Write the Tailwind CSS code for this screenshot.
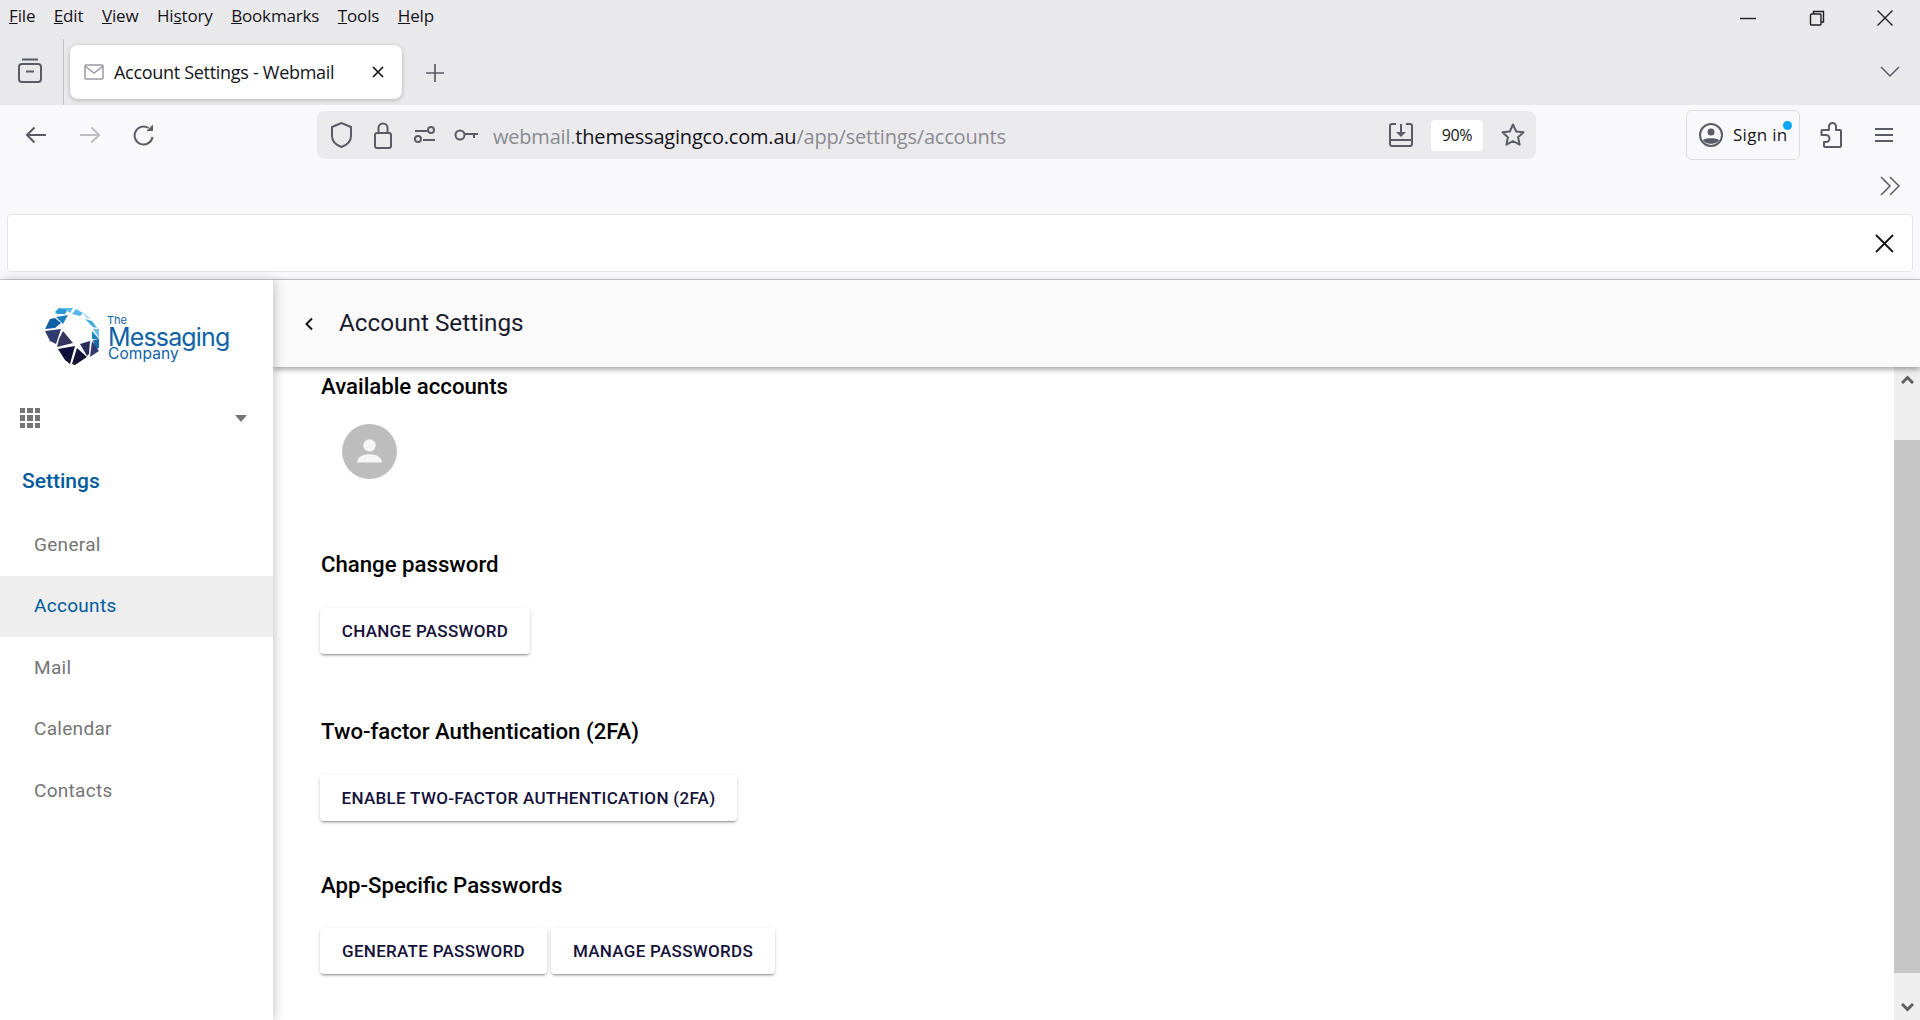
<!DOCTYPE html>
<html lang="en">
  <head>
    <meta charset="UTF-8" />
    <script src="https://cdn.jsdelivr.net/npm/@tailwindcss/browser@4"></script>
    <title>Account Settings - Webmail</title>
  </head>
  <body class="bg-white">
    <div class="flex flex-col w-[1920px] h-[1020px] overflow-hidden font-['Roboto',sans-serif]">
      <!-- menu bar -->
      <div class="flex items-center h-[35px] shrink-0 bg-[#e9e9ec] pl-[9px] text-[17px] text-[#15141a] font-['Open_Sans',sans-serif]">
        <div class="flex gap-[18.500px] tracking-[-0.15px] mb-[4px]">
          <span><u>F</u>ile</span>
          <span><u>E</u>dit</span>
          <span><u>V</u>iew</span>
          <span>Hi<u>s</u>tory</span>
          <span><u>B</u>ookmarks</span>
          <span><u>T</u>ools</span>
          <span><u>H</u>elp</span>
        </div>
        <div class="ml-auto flex items-center">
          <svg class="w-[18px] h-[18px] mr-[51px]" viewBox="0 0 18 18" fill="none" stroke="#1f1e24" stroke-width="1.4"><path d="M1 9.500h16"/></svg>
          <svg class="w-[18px] h-[18px] mr-[50px]" viewBox="0 0 18 18" fill="none" stroke="#1f1e24" stroke-width="1.4"><rect x="2.500" y="5" width="10.500" height="11" rx="1"/><path d="M5.500 5V2.500h10V13H13"/></svg>
          <svg class="w-[18px] h-[18px] mr-[26px]" viewBox="0 0 18 18" fill="none" stroke="#1f1e24" stroke-width="1.4"><path d="M1.500 1.500l15 15M16.500 1.500l-15 15"/></svg>
        </div>
      </div>

      <!-- tab strip -->
      <div class="flex h-[70px] shrink-0 bg-[#e9e9ec] text-[#15141a] font-['Open_Sans',sans-serif]">
        <div class="w-[63px] h-full flex items-center justify-center pb-[1px] pr-[3px]">
          <svg class="w-[26px] h-[28px]" viewBox="0 0 26 28" fill="none" stroke="#5b5b66" stroke-width="2"><rect x="2" y="8" width="22" height="18" rx="3"/><path d="M5 3.500h16M9 15.500h8"/></svg>
        </div>
        <div class="w-px h-[66px] mt-[4px] bg-[#c4c4c8]"></div>
        <div class="ml-[6px] mt-[10px] w-[332px] h-[54px] bg-white rounded-lg shadow-[0_1px_4px_rgba(0,0,0,0.25)] flex items-center pl-[14px] pr-[18px]">
          <svg class="w-[20px] h-[16px] shrink-0" viewBox="0 0 20 16" fill="none" stroke="#9a9aa3" stroke-width="1.5"><rect x="1" y="1" width="18" height="14" rx="1"/><path d="M1 2l9 7 9-7"/></svg>
          <span class="ml-[10px] text-[18px] tracking-[-0.3px] whitespace-nowrap">Account Settings - Webmail</span>
          <svg class="ml-auto w-[12px] h-[12px]" viewBox="0 0 12 12" fill="none" stroke="#15141a" stroke-width="1.7"><path d="M1 1l10 10M11 1L1 11"/></svg>
        </div>
        <div class="ml-[24px] mt-[11px] h-[54px] flex items-center">
          <svg class="w-[18px] h-[18px]" viewBox="0 0 18 18" fill="none" stroke="#5b5b66" stroke-width="1.7"><path d="M9 0v18M0 9h18"/></svg>
        </div>
        <div class="ml-auto mr-[20px] mt-[10px] h-[54px] flex items-center">
          <svg class="w-[20px] h-[12px]" viewBox="0 0 20 12" fill="none" stroke="#5b5b66" stroke-width="1.5"><path d="M1 1l9 9 9-9"/></svg>
        </div>
      </div>

      <!-- nav bar -->
      <div class="flex items-center h-[63px] shrink-0 bg-[#f9f9fb] pb-[3px] font-['Open_Sans',sans-serif]">
        <svg class="ml-[25px] w-[22px] h-[18px]" viewBox="0 0 22 18" fill="none" stroke="#5b5b66" stroke-width="2"><path d="M21 9H2M9.500 1.500L2 9l7.500 7.500"/></svg>
        <svg class="ml-[32px] w-[22px] h-[18px]" viewBox="0 0 22 18" fill="none" stroke="#bdbdc2" stroke-width="2"><path d="M1 9h19M12.500 1.500L20 9l-7.500 7.500"/></svg>
        <svg class="ml-[32px] w-[22px] h-[24px]" viewBox="0 0 22 24" fill="none" stroke="#5b5b66" stroke-width="2"><path d="M19.500 14a9 9 0 1 1-4-9"/><path d="M20 1.500v6.500h-6.500" fill="#5b5b66" stroke="none"/></svg>
        <div class="ml-[162px] w-[1219px] h-[48px] bg-[#eaeaed] rounded-lg flex items-center">
          <svg class="ml-[13px] w-[23px] h-[28px] shrink-0" viewBox="0 0 23 28" fill="none" stroke="#5b5b66" stroke-width="2"><path d="M11.500 2L2 6v9c0 5 4 9 9.500 11 5.500-2 9.500-6 9.500-11V6z"/></svg>
          <svg class="ml-[21px] w-[18px] h-[28px] shrink-0" viewBox="0 0 18 28" fill="none" stroke="#5b5b66" stroke-width="2"><rect x="1" y="12" width="16" height="15" rx="2"/><path d="M4.500 12V7a4.500 4.500 0 0 1 9 0v5"/></svg>
          <svg class="ml-[22px] w-[22px] h-[18px] shrink-0" viewBox="0 0 22 18" fill="none" stroke="#5b5b66" stroke-width="2"><path d="M1 5h12M9 14h12"/><circle cx="17" cy="4" r="3"/><circle cx="4" cy="13" r="3"/></svg>
          <svg class="ml-[18px] w-[24px] h-[14px] shrink-0" viewBox="0 0 24 14" fill="none" stroke="#5b5b66" stroke-width="2"><circle cx="6" cy="7" r="4.500"/><path d="M10 6h14M20 6v4"/></svg>
          <div class="ml-[15px] mt-[3px] text-[20px] tracking-[-0.2px] text-[#8a8a90] whitespace-nowrap">webmail.<span class="text-[#15141a]">themessagingco.com.au</span>/app/settings/accounts</div>
          <svg class="ml-auto w-[24px] h-[24px] shrink-0" viewBox="0 0 24 24" fill="none" stroke="#5b5b66" stroke-width="2"><path d="M7 1H3a2 2 0 0 0-2 2v18a2 2 0 0 0 2 2h18a2 2 0 0 0 2-2V3a2 2 0 0 0-2-2h-4M1 17h22"/><path d="M12 1v9" /><path d="M7 9h10l-5 5z" fill="#5b5b66" stroke="none"/></svg>
          <div class="ml-[18px] w-[52px] h-[31px] bg-white rounded-[4px] flex items-center justify-center text-[16px] text-[#15141a] tracking-[-0.4px] shrink-0">90%</div>
          <svg class="ml-[18px] mr-[11px] w-[24px] h-[24px] shrink-0" viewBox="0 0 24 24" fill="none" stroke="#5b5b66" stroke-width="2" stroke-linejoin="round"><path d="M12 1.500l3.200 7 7.300.8-5.400 5 1.500 7.400L12 18l-6.600 3.700 1.500-7.400-5.400-5 7.300-.8z"/></svg>
        </div>
        <div class="relative ml-[150px] w-[114px] h-[50px] border border-[#dcdce0] rounded-md flex items-center pl-[12px]">
          <svg class="w-[24px] h-[24px] shrink-0" viewBox="0 0 24 24" fill="none" stroke="#5b5b66" stroke-width="2"><circle cx="12" cy="12" r="11"/><circle cx="12" cy="9" r="3.500" fill="#5b5b66" stroke="none"/><path d="M4 17c2-2.500 14-2.500 16 0-2 5-14 5-16 0z" fill="#5b5b66" stroke="none"/></svg>
          <span class="ml-[10px] text-[17px] text-[#15141a] tracking-[0.3px] whitespace-nowrap">Sign in</span>
          <div class="absolute right-[7px] top-[10px] w-[9px] h-[9px] rounded-full bg-[#0aa5ff]"></div>
        </div>
        <svg class="ml-[20px] w-[22px] h-[26px]" viewBox="0 0 22 26" fill="none" stroke="#5b5b66" stroke-width="2" stroke-linejoin="round"><path d="M9 6V4.500a3.500 3.500 0 0 1 7 0V8h4a1 1 0 0 1 1 1v15a1 1 0 0 1-1 1H5a1 1 0 0 1-1-1v-4h2a3 3 0 0 0 0-7H1.500V9a1 1 0 0 1 1-1H9z"/></svg>
        <svg class="ml-[33px] w-[18px] h-[16px]" viewBox="0 0 18 16" fill="none" stroke="#5b5b66" stroke-width="2"><path d="M0 2h18M0 8h18M0 14h18"/></svg>
      </div>

      <!-- bookmarks row -->
      <div class="flex justify-end h-[36px] shrink-0 bg-[#f9f9fb] pr-[20px] pt-[8px]">
        <svg class="w-[20px] h-[20px]" viewBox="0 0 20 20" fill="none" stroke="#5b5b66" stroke-width="1.5"><path d="M1 1l9 9-9 9M10 1l9 9-9 9"/></svg>
      </div>

      <!-- notification bar -->
      <div class="h-[76px] shrink-0 bg-[#f9f9fb] px-[7px] pt-[10px] border-b border-[#cfcfd3]">
        <div class="h-[58px] bg-white border border-[#e6e6ea] rounded-[4px] flex items-center justify-end pr-[18px]">
          <svg class="w-[19px] h-[19px]" viewBox="0 0 19 19" fill="none" stroke="#15141a" stroke-width="1.8"><path d="M1 1l17 17M18 1L1 18"/></svg>
        </div>
      </div>

      <!-- page -->
      <div class="flex flex-1 min-h-0">
        <aside class="relative z-20 w-[273px] shrink-0 bg-white shadow-[2px_0_10px_rgba(0,0,0,0.22)]">
          <div class="flex items-start h-[98px] pl-[45px] pt-[27px]">
            <svg class="w-[56px] h-[58px] shrink-0" viewBox="0 0 56 58">
              <polygon fill="#2a9ad6" points="10,5 14,1 23,2 20,7 12,7"/>
              <polygon fill="#5cbcec" points="18,1 28,1 25,6"/>
              <polygon fill="#55b5e8" points="27,7 31,2 38,6 35,9"/>
              <polygon fill="#a5defa" points="38,5 46,12 41,11"/>
              <polygon fill="#3fa9e0" points="40,12 47,14 52,21 48,20"/>
              <polygon fill="#6cc0ea" points="48,22 54,22 54,31"/>
              <polygon fill="#1a85c5" points="47,24 54,32 47,32"/>
              <polygon fill="#1a6aa8" points="48,33 54,32 54,41 50,42"/>
              <polygon fill="#0f5fa5" points="0,22 5,12 10,11 16,16 10,21"/>
              <polygon fill="#1a7fc0" points="11,10 23,8 18,17"/>
              <polygon fill="#2f3b6e" points="0,24 16,22 11,37 5,34"/>
              <polygon fill="#35355f" points="18,24 28,36 12,40 14,32"/>
              <polygon fill="#10103a" points="13,42 30,39 25,57 20,53"/>
              <polygon fill="#141238" points="32,41 42,50 30,58 27,57"/>
              <polygon fill="#2a2a5c" points="35,37 45,34 44,47 42,49"/>
              <polygon fill="#343a6e" points="47,34 54,44 45,50"/>
            </svg>
            <div class="ml-[7px] mt-[8px] flex flex-col text-[#0f62a8] font-['Inter',sans-serif]">
              <span class="text-[11px] leading-[11px] ml-[-1px]">The</span>
              <span class="text-[25px] leading-[20px] mt-[1px] tracking-[-0.85px] whitespace-nowrap">Messaging</span>
              <span class="text-[15.500px] leading-[14px] tracking-[0.1px]">Company</span>
            </div>
          </div>
          <div class="flex items-center justify-between h-[40px] pl-[20px] pr-[26px] mt-[20px]">
            <div class="grid grid-cols-3 gap-[2px] w-[20px]">
              <i class="h-[5.300px] bg-[#757575]"></i><i class="h-[5.300px] bg-[#757575]"></i><i class="h-[5.300px] bg-[#757575]"></i>
              <i class="h-[5.300px] bg-[#757575]"></i><i class="h-[5.300px] bg-[#757575]"></i><i class="h-[5.300px] bg-[#757575]"></i>
              <i class="h-[5.300px] bg-[#757575]"></i><i class="h-[5.300px] bg-[#757575]"></i><i class="h-[5.300px] bg-[#757575]"></i>
            </div>
            <svg class="w-[12px] h-[7px]" viewBox="0 0 12 7" fill="#757575"><path d="M0 0h12L6 7z"/></svg>
          </div>
          <div class="pl-[22px] mt-[27px] text-[21px] font-medium leading-[32px] text-[#005a9c]">Settings</div>
          <nav class="mt-[17px] text-[19px] tracking-[0.3px] text-[#757575]">
            <a class="flex items-center h-[61.500px] pl-[34px]">General</a>
            <a class="flex items-center h-[61.500px] pl-[34px] bg-[#eeeeee] text-[#005a9c]">Accounts</a>
            <a class="flex items-center h-[61.500px] pl-[34px]">Mail</a>
            <a class="flex items-center h-[61.500px] pl-[34px]">Calendar</a>
            <a class="flex items-center h-[61.500px] pl-[34px]">Contacts</a>
          </nav>
        </aside>

        <main class="flex flex-col flex-1 min-w-0">
          <header class="relative z-10 flex items-center h-[87px] shrink-0 bg-[#fafafa] shadow-[0_2px_6px_rgba(0,0,0,0.4)] pl-[30px]">
            <svg class="w-[12px] h-[14px]" viewBox="0 0 12 14" fill="none" stroke="#15141a" stroke-width="2"><path d="M9 1.500L3.500 7 9 12.500"/></svg>
            <h1 class="ml-[24px] text-[24.300px] text-[#1a1a2e]">Account Settings</h1>
          </header>
          <div class="flex flex-1 min-h-0">
            <div class="flex-1 min-w-0 pl-[47px] pt-[4px] text-black">
              <h2 class="ml-px text-[22.200px] font-medium leading-[30px]">Available accounts</h2>
              <div class="ml-[22px] mt-[23px] w-[55px] h-[55px] rounded-full bg-[#bdbdbd] flex items-center justify-center">
                <svg class="w-[33px] h-[33px]" viewBox="0 0 24 24" fill="#f5f5f5"><circle cx="12" cy="7.500" r="4.500"/><path d="M3 20c0-4.500 5-6 9-6s9 1.500 9 6z"/></svg>
              </div>
              <h2 class="ml-px mt-[70px] text-[22.200px] font-medium leading-[30px]">Change password</h2>
              <button class="mt-[29px] pt-px h-[46px] w-[210px] block bg-white rounded-[4px] text-[17px] font-medium tracking-[0.3px] text-[#14123a] shadow-[0_3px_1px_-2px_rgba(0,0,0,0.2),0_2px_2px_0_rgba(0,0,0,0.14),0_1px_5px_0_rgba(0,0,0,0.12)]">CHANGE PASSWORD</button>
              <h2 class="ml-px mt-[62px] text-[22.200px] font-medium leading-[30px]">Two-factor Authentication (2FA)</h2>
              <button class="mt-[29px] pt-px h-[46px] w-[417px] block bg-white rounded-[4px] text-[17px] font-medium tracking-[0.3px] text-[#14123a] shadow-[0_3px_1px_-2px_rgba(0,0,0,0.2),0_2px_2px_0_rgba(0,0,0,0.14),0_1px_5px_0_rgba(0,0,0,0.12)]">ENABLE TWO-FACTOR AUTHENTICATION (2FA)</button>
              <h2 class="ml-px mt-[49px] text-[22.200px] font-medium leading-[30px]">App-Specific Passwords</h2>
              <div class="mt-[28px] flex gap-[4px]">
                <button class="pt-px h-[46px] w-[227px] bg-white rounded-[4px] text-[17px] font-medium tracking-[0.3px] text-[#14123a] shadow-[0_3px_1px_-2px_rgba(0,0,0,0.2),0_2px_2px_0_rgba(0,0,0,0.14),0_1px_5px_0_rgba(0,0,0,0.12)]">GENERATE PASSWORD</button>
                <button class="pt-px h-[46px] w-[224px] bg-white rounded-[4px] text-[17px] font-medium tracking-[0.3px] text-[#14123a] shadow-[0_3px_1px_-2px_rgba(0,0,0,0.2),0_2px_2px_0_rgba(0,0,0,0.14),0_1px_5px_0_rgba(0,0,0,0.12)]">MANAGE PASSWORDS</button>
              </div>
            </div>
            <!-- scrollbar -->
            <div class="w-[26px] shrink-0 bg-[#eeeeee] flex flex-col items-center">
              <div class="h-[73px] w-full flex items-start justify-center pt-[8px]">
                <svg class="w-[13px] h-[9px]" viewBox="0 0 13 9" fill="none" stroke="#606060" stroke-width="3"><path d="M1 8l5.500-5.500L12 8"/></svg>
              </div>
              <div class="flex-1 w-full bg-[#c6c6c6]"></div>
              <div class="h-[47px] w-full flex items-end justify-center pb-[8px]">
                <svg class="w-[13px] h-[9px]" viewBox="0 0 13 9" fill="none" stroke="#606060" stroke-width="3"><path d="M1 1l5.500 5.500L12 1"/></svg>
              </div>
            </div>
          </div>
        </main>
      </div>
    </div>
  </body>
</html>
